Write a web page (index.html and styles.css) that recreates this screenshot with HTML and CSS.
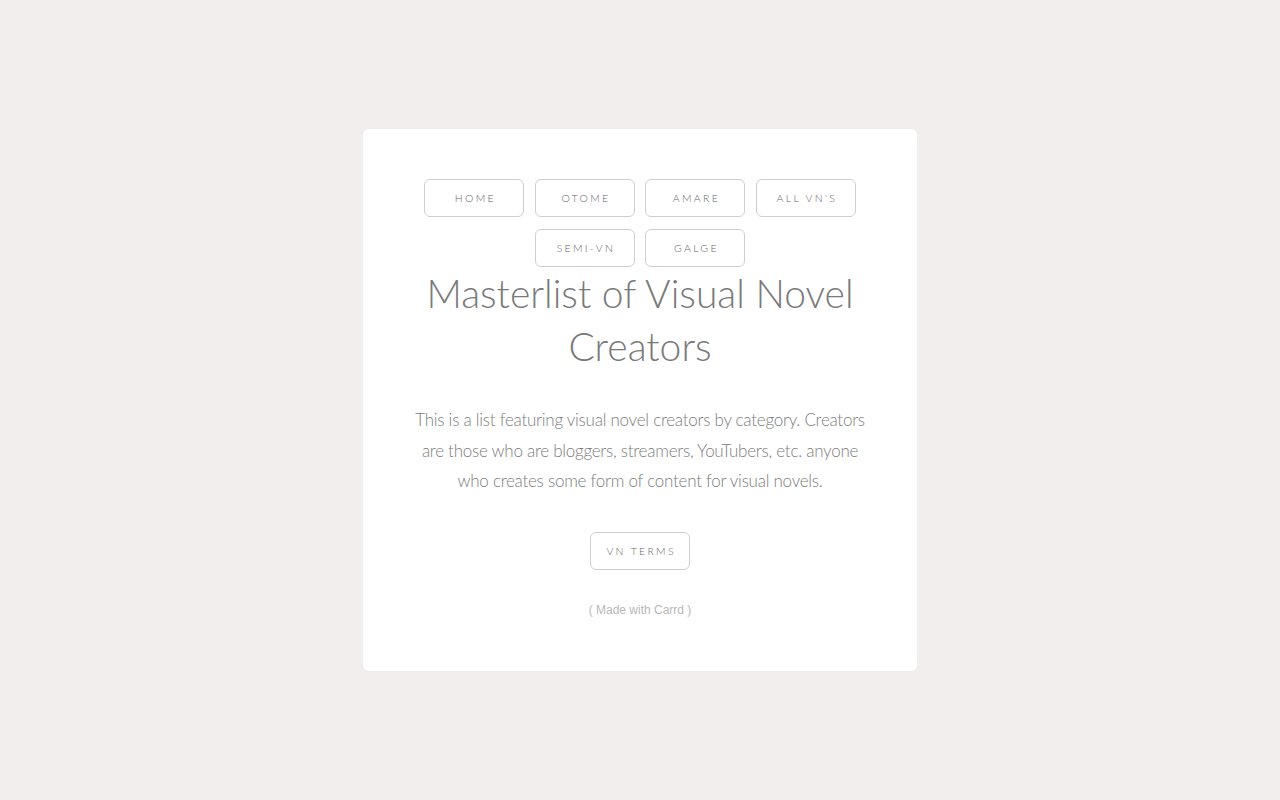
FILE: index.html
```html
<!DOCTYPE html>
<html lang="en">
<head>
<meta charset="utf-8">
<title>Masterlist of Visual Novel Creators</title>
<link rel="stylesheet" href="styles.css">
</head>
<body>
<main class="page">
  <section class="card">
    <nav class="buttons">
      <a class="btn" href="#">Home</a>
      <a class="btn" href="#">Otome</a>
      <a class="btn" href="#">Amare</a>
      <a class="btn" href="#">All VN's</a>
      <a class="btn" href="#">Semi-VN</a>
      <a class="btn" href="#">Galge</a>
    </nav>
    <h1 class="title">Masterlist of Visual Novel Creators</h1>
    <p class="intro">This is a list featuring visual novel creators by category. Creators are those who are bloggers, streamers, YouTubers, etc. anyone who creates some form of content for visual novels.</p>
    <nav class="buttons single">
      <a class="btn" href="#">VN Terms</a>
    </nav>
    <p class="credit">( Made with Carrd )</p>
  </section>
</main>
</body>
</html>
```
FILE: styles.css
```css
html, body {
  margin: 0;
  padding: 0;
}
body {
  background: #f2eeed;
  font-family: Lato, "Noto Sans", sans-serif;
}
.page {
  min-height: 800px;
  display: flex;
  align-items: center;
  justify-content: center;
}
.card {
  width: 554px;
  box-sizing: border-box;
  background: #ffffff;
  border-radius: 6px;
  padding: 50px 50px 54px;
  display: flex;
  flex-direction: column;
  align-items: center;
  text-align: center;
}
.buttons {
  display: flex;
  flex-wrap: wrap;
  justify-content: center;
  column-gap: 10.5px;
  row-gap: 12px;
  width: 440px;
}
.btn {
  width: 100px;
  height: 38px;
  box-sizing: border-box;
  border: 1px solid #cfcfcf;
  border-radius: 6px;
  display: flex;
  align-items: center;
  justify-content: center;
  font-family: Lato, sans-serif;
  font-weight: 300;
  font-size: 10.5px;
  letter-spacing: 0.22em;
  text-transform: uppercase;
  color: #666666;
  text-decoration: none;
  padding-left: 0.22em;
}
.title {
  margin: 0;
  font-family: Lato, sans-serif;
  font-weight: 300;
  font-size: 39px;
  line-height: 53px;
  color: #7a7a7a;
  letter-spacing: 0;
}
.intro {
  margin: 32px 0 0;
  font-family: Lato, sans-serif;
  font-weight: 300;
  font-size: 17px;
  letter-spacing: -0.015em;
  line-height: 30.5px;
  color: #7d7d7d;
}
.single {
  margin-top: 35.5px;
}
.credit {
  margin: 33px 0 0;
  font-family: "Liberation Sans", Arial, sans-serif;
  font-size: 12px;
  line-height: 14px;
  color: #b8b8b8;
}
```
